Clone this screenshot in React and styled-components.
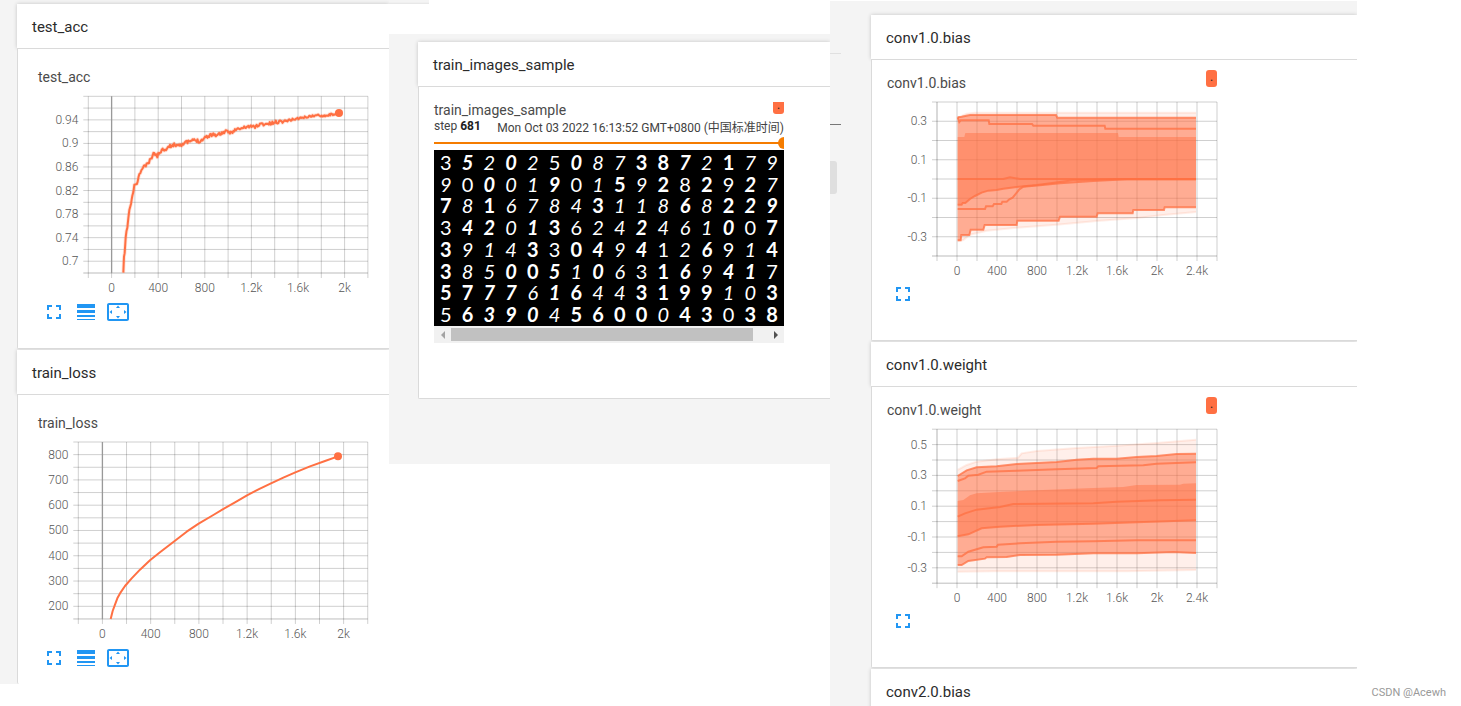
import React from 'react';
import styled, { createGlobalStyle, css } from 'styled-components';

const ORANGE = '#ff7043';

const GlobalStyle = createGlobalStyle`
  * { box-sizing: border-box; }
  body {
    margin: 0;
    background: #fff;
    font-family: Roboto, 'Noto Sans CJK SC', sans-serif;
    color: #212121;
  }
`;

const Page = styled.main`
  display: grid;
  grid-template-columns: 389fr 441fr 527fr 104fr;
  height: 100vh;
  overflow: hidden;
`;

const Column = styled.div`
  min-width: 0;
  display: flex;
  flex-direction: column;
`;

const Pane = styled.div`
  background: #f4f4f4;
  overflow: hidden;
  padding: ${(p) => p.$pad};
  ${(p) => p.$fill && css`
    flex: 1;
    min-height: 0;
    margin-top: 1px;
    display: flex;
  `}
`;

const TopStrip = styled.div`
  width: 40px;
  height: 4px;
  margin-bottom: 30px;
  background: linear-gradient(#f4f4f4 50%, #e4e4e4);
`;

const Stack = styled.div`
  flex: 1;
  min-width: 0;
  padding-top: 14px;
`;

const Gutter = styled.div`
  width: 41px;
  flex: none;
  display: flex;
  flex-direction: column;
`;

const GutterRule = styled.div`
  width: 11px;
  height: 1px;
  margin-top: ${(p) => p.$top}px;
  background: ${(p) => p.$color};
`;

const GutterThumb = styled.div`
  width: 7px;
  height: 33px;
  margin-top: 36px;
  border-radius: 0 3px 3px 0;
  background: #dfdfdf;
`;

const Card = styled.section`
  margin-bottom: ${(p) => (p.$open ? 0 : 1)}px;
`;

const CardHead = styled.h2`
  margin: 0;
  height: 44px;
  padding: 1px 15px 0;
  display: flex;
  align-items: center;
  background: #fff;
  box-shadow: 0 0 4px rgba(0, 0, 0, 0.2);
  font-size: 15px;
  font-weight: 400;
  line-height: 20px;
  color: #2b2b2b;
`;

const CardBody = styled.div`
  min-height: ${(p) => p.$height}px;
  padding: ${(p) => p.$pad};
  background: #fff;
  border: 1px solid #dadada;
  border-right: 0;
  border-bottom-width: ${(p) => (p.$open ? 0 : 1)}px;
  border-bottom-left-radius: 2px;
  position: relative;
`;

const TitleRow = styled.div`
  display: flex;
  justify-content: space-between;
  align-items: flex-start;
  max-width: ${(p) => p.$width}px;
  height: 20px;
`;

const ChartTitle = styled.h3`
  margin: 0;
  font-size: 14px;
  font-weight: 400;
  line-height: 20px;
  color: #4a4a4a;
`;

const RunBadge = styled.span`
  width: 11px;
  height: ${(p) => (p.$cut ? 12 : 17)}px;
  margin-top: ${(p) => (p.$cut ? 2 : -3)}px;
  border-radius: ${(p) => (p.$cut ? '0 0 3px 3px' : '3px')};
  background: ${ORANGE};
  font-size: 12px;
  line-height: ${(p) => (p.$cut ? 6 : 15)}px;
  text-align: center;
`;

const Plot = styled.svg`
  display: block;
  margin-top: ${(p) => p.$gap}px;
  text {
    font-size: 12px;
    font-weight: 300;
    fill: #555;
  }
`;

const Toolbar = styled.div`
  display: flex;
  gap: 8px;
  margin: 4px 0 0 4px;
`;

const IconButton = styled.button`
  width: 24px;
  height: 24px;
  padding: 0;
  border: 0;
  background: none;
  color: #2196f3;
  cursor: pointer;
  svg { display: block; fill: currentColor; }
`;

const StepRow = styled.div`
  display: flex;
  justify-content: space-between;
  max-width: 350px;
  height: 16px;
  font-size: 12px;
  line-height: 16px;
  white-space: nowrap;
  color: #424242;
`;

const Step = styled.span`
  line-height: 12px;
  b { font-weight: 700; color: #212121; }
`;

const SliderBox = styled.div`
  max-width: 350px;
  height: 14px;
  overflow: hidden;
`;

const Slider = styled.input`
  appearance: none;
  display: block;
  width: calc(100% + 6px);
  height: 14px;
  margin: 0;
  background: linear-gradient(#f57c00, #f57c00) center / 100% 2px no-repeat;
  &::-webkit-slider-thumb {
    appearance: none;
    width: 12px;
    height: 12px;
    border-radius: 50%;
    background: #f57c00;
  }
`;

const DigitSheet = styled.div`
  max-width: 350px;
  height: 176px;
  padding: 1px;
  background: #000;
  display: grid;
  grid-template-columns: repeat(16, 1fr);
  grid-template-rows: repeat(8, 1fr);
  overflow: hidden;
`;

const Digit = styled.span`
  display: flex;
  align-items: center;
  justify-content: center;
  color: #fff;
  font-family: Lato, sans-serif;
  font-size: 20px;
  line-height: 20px;
  font-weight: ${(p) => (p.$hand === 'b' || p.$hand === 'x' ? 700 : 400)};
  font-style: ${(p) => (p.$hand === 'i' || p.$hand === 'x' ? 'italic' : 'normal')};
`;

const ScrollTrack = styled.div`
  max-width: 350px;
  height: 17px;
  display: flex;
  align-items: center;
  background: #f1f1f1;
`;

const ScrollArrow = styled.button`
  width: 17px;
  height: 17px;
  padding: 0;
  border: 0;
  background: none;
  display: grid;
  place-items: center;
  color: ${(p) => (p.$dim ? '#a3a3a3' : '#505050')};
  svg { display: block; fill: currentColor; }
`;

const ScrollLane = styled.div`
  flex: 1;
`;

const ScrollThumb = styled.div`
  width: 302px;
  max-width: 96%;
  height: 13px;
  background: #c1c1c1;
`;

const Credit = styled.footer`
  margin-top: auto;
  padding: 0 15px 13px 0;
  text-align: right;
  font-size: 11px;
  line-height: 16px;
  color: #999;
  white-space: nowrap;
`;

const ICONS = {
  'Toggle full screen':
    'M7 14H5v5h5v-2H7v-3zm-2-4h2V7h3V5H5v5zm12 7h-3v2h5v-5h-2v3zM14 5v2h3v3h2V5h-5z',
  'Toggle log scale':
    'M3 17h18v-2H3v2zm0 3h18v-1H3v1zm0-7h18v-3H3v3zm0-9v4h18V4H3z',
  'Fit to data':
    'M12.01 5.5L10 8h4l-1.99-2.5zM18 10v4l2.5-1.99L18 10zM6 10l-2.5 2.01L6 14v-4zm8 6h-4l2.01 2.5L14 16zm7-13H3c-1.1 0-2 .9-2 2v14c0 1.1.9 2 2 2h18c1.1 0 2-.9 2-2V5c0-1.1-.9-2-2-2zm0 16.01H3V4.99h18v14.02z',
};

function Tools({ names }) {
  return (
    <Toolbar>
      {names.map((name) => (
        <IconButton key={name} type="button" aria-label={name}>
          <svg width="24" height="24" viewBox="0 0 24 24">
            <path d={ICONS[name]} />
          </svg>
        </IconButton>
      ))}
    </Toolbar>
  );
}

// Grid lines, ticks and labels. Every second line carries a label.
function Axes({ x, y, zero }) {
  const xs = Array.from({ length: x.count }, (_, i) => x.start + i * x.step);
  const ys = Array.from({ length: y.count }, (_, i) => y.start + i * y.step);
  const left = xs[0] - 5;
  const right = xs[xs.length - 1];
  const top = ys[0];
  const bottom = ys[ys.length - 1];
  return (
    <>
      <g stroke="#000" strokeOpacity="0.19">
        {xs.map((v) => <line key={v} x1={v} x2={v} y1={top} y2={bottom + 5} />)}
        {ys.map((v) => <line key={v} x1={left} x2={right} y1={v} y2={v} />)}
        <line x1={left} x2={right} y1={bottom} y2={bottom} strokeOpacity="0.08" />
        {!zero && <line x1={xs[0]} x2={xs[0]} y1={top} y2={bottom} strokeOpacity="0.12" />}
      </g>
      {zero && <line x1={xs[1]} x2={xs[1]} y1={top} y2={bottom} stroke="#999" strokeWidth="1.3" />}
      {x.labels.map((t, i) => (
        <text key={t} x={xs[1 + 2 * i]} y={bottom + 19} textAnchor="middle">{t}</text>
      ))}
      {y.labels.map((t, i) => (
        <text key={t} x={left - 5} y={ys[y.first + 2 * i] + 4} textAnchor="end">{t}</text>
      ))}
    </>
  );
}

const join = (pts) => 'M' + pts.join('L');

// Resamples a curve and adds a repeatable ripple to it.
function ripple(pts, gap, size) {
  const out = [pts[0]];
  let seed = 11;
  for (let i = 1; i < pts.length; i++) {
    const [ax, ay] = pts[i - 1];
    const [bx, by] = pts[i];
    const n = Math.max(1, Math.round((bx - ax) / gap));
    for (let k = 1; k <= n; k++) {
      seed = (seed * 16807) % 2147483647;
      const r = seed / 2147483647 - 0.5;
      const px = ax + ((bx - ax) * k) / n;
      const amp = px > 850 ? size * 0.6 : size;
      out.push([px, ay + ((by - ay) * k) / n + r * amp]);
    }
  }
  out[out.length - 1] = pts[pts.length - 1];
  return out;
}

const ACC = ripple([
  [370, 818], [372, 775], [374, 760], [377, 715], [382, 680], [388, 630], [393, 612], [397, 590],
  [403, 558], [413, 546], [418, 525], [424, 510], [432, 499], [440, 495], [447, 487], [455, 472],
  [463, 458], [472, 468], [480, 455], [488, 449], [500, 445], [515, 436], [530, 434], [545, 433],
  [560, 427], [585, 420], [600, 424], [615, 412], [640, 402], [650, 406], [675, 395], [690, 398],
  [710, 388], [725, 386], [740, 380], [765, 380], [780, 373], [812, 371], [830, 366], [860, 362],
  [890, 356], [925, 350], [950, 346], [975, 347], [1017, 339],
], 2.6, 10);

const LOSS = [
  [332, 822], [338, 798], [345, 779], [352, 760], [362, 742], [375, 723], [395, 700], [420, 674],
  [450, 646], [480, 622], [523, 589], [560, 560], [596, 536], [640, 510], [668, 493], [705, 472],
  [741, 451], [780, 431], [813, 415], [850, 398], [886, 382], [930, 364], [975, 348], [1014, 334],
];

const BIAS = {
  max: [[293, 352], [300, 350], [320, 341], [345, 338], [1008, 338]],
  top: [[293, 352], [305, 350], [330, 345], [588, 345], [592, 353], [1008, 353]],
  innerTop: [[293, 411], [313, 411], [316, 399], [774, 399], [776, 411], [1008, 411]],
  innerBottom: [[293, 614], [305, 614], [308, 609], [316, 609], [330, 597], [345, 588], [365, 578], [385, 572], [410, 570], [430, 566], [470, 561], [530, 555], [560, 551], [600, 546], [640, 541], [760, 538], [1008, 538]],
  bottom: [[293, 721], [302, 721], [304, 705], [328, 705], [332, 689], [370, 689], [374, 675], [470, 675], [472, 662], [596, 662], [600, 650], [710, 650], [713, 640], [818, 640], [820, 630], [912, 630], [914, 622], [1008, 622]],
  min: [[293, 724], [310, 720], [330, 704], [380, 692], [470, 683], [590, 674], [710, 663], [830, 654], [910, 645], [1008, 636]],
  lines: [
    [[293, 352], [298, 366], [302, 361], [386, 361], [388, 372], [516, 372], [520, 377], [734, 377], [736, 386], [1008, 386]],
    [[293, 537], [430, 537], [450, 532], [480, 537], [1008, 537]],
    [[293, 627], [375, 627], [378, 619], [398, 619], [402, 612], [424, 612], [427, 605], [440, 605], [448, 598], [458, 593], [466, 583], [478, 568], [490, 560], [540, 556], [600, 550], [700, 543], [800, 538], [1008, 538]],
  ],
};

const WEIGHT = {
  max: [[293, 405], [320, 390], [350, 380], [410, 373], [474, 368], [485, 355], [530, 348], [650, 339], [770, 332], [890, 324], [1008, 314]],
  top: [[293, 423], [320, 406], [350, 397], [410, 394], [470, 387], [590, 381], [650, 374], [700, 371], [770, 371], [830, 366], [890, 363], [950, 357], [1008, 356]],
  innerTop: [[293, 498], [310, 495], [330, 481], [350, 475], [420, 471], [550, 465], [680, 460], [790, 456], [830, 450], [960, 449], [970, 446], [1008, 445]],
  innerBottom: [[293, 604], [325, 598], [365, 580], [420, 575], [530, 570], [700, 566], [830, 562], [1008, 556]],
  bottom: [[293, 690], [305, 690], [325, 678], [375, 671], [380, 667], [440, 666], [480, 660], [590, 659], [700, 655], [830, 655], [940, 651], [1008, 654]],
  min: [[293, 710], [400, 709], [800, 709], [1008, 705]],
  lines: [
    [[293, 438], [315, 430], [325, 422], [355, 419], [380, 410], [470, 407], [590, 403], [710, 399], [715, 394], [850, 391], [890, 386], [1008, 382]],
    [[293, 545], [315, 535], [350, 524], [420, 516], [460, 507], [700, 505], [770, 500], [900, 496], [1008, 494]],
    [[293, 664], [305, 664], [325, 650], [370, 637], [410, 635], [414, 629], [480, 625], [590, 620], [700, 619], [830, 616], [1008, 616]],
  ],
};

function ScalarCard({ name, x, y, curve, shiftY, open, noisy }) {
  const end = curve[curve.length - 1];
  return (
    <Card $open={open}>
      <CardHead>{name}</CardHead>
      <CardBody $height={open ? 290 : 301} $pad="18px 0 0 20px" $open={open}>
        <TitleRow $width={330}>
          <ChartTitle>{name}</ChartTitle>
        </TitleRow>
        <Plot width="340" height="204" $gap={5} role="img" aria-label={`${name} by step`}>
          <Axes x={x} y={y} zero />
          <g transform={`translate(-38 ${shiftY}) scale(0.33333)`} fill="none" stroke={ORANGE} strokeLinejoin="round">
            {noisy && <path d={join(curve)} strokeWidth="11" strokeOpacity="0.2" />}
            <path d={join(curve)} strokeWidth="6" />
            <circle cx={end[0]} cy={end[1]} r="12" fill={ORANGE} stroke="none" />
          </g>
        </Plot>
        <Tools names={['Toggle full screen', 'Toggle log scale', 'Fit to data']} />
      </CardBody>
    </Card>
  );
}

function DistributionCard({ name, y, bands, shiftY }) {
  const area = (a, b) => join([...a, ...[...b].reverse()]) + 'Z';
  return (
    <Card>
      <CardHead>{name}</CardHead>
      <CardBody $height={282} $pad="13px 0 0 15px">
        <TitleRow $width={330}>
          <ChartTitle>{name}</ChartTitle>
          <RunBadge>.</RunBadge>
        </TitleRow>
        <Plot width="340" height="182" $gap={3} role="img" aria-label={`${name} distribution`}>
          <Axes
            x={{ start: 50, step: 20, count: 15, labels: ['0', '400', '800', '1.2k', '1.6k', '2k', '2.4k'] }}
            y={y}
          />
          <g transform={`translate(-27 ${shiftY}) scale(0.33333)`} fill={ORANGE}>
            <path d={area(bands.max, bands.min)} opacity="0.11" />
            <path d={area(bands.top, bands.bottom)} opacity="0.52" />
            <path d={area(bands.innerTop, bands.innerBottom)} opacity="0.47" />
            <g fill="none" stroke={ORANGE} strokeWidth="6">
              <path d={join(bands.max)} opacity="0.12" />
              <path d={join(bands.min)} opacity="0.12" />
              {[bands.top, bands.innerBottom, bands.bottom, ...bands.lines].map((line, i) => (
                <path key={i} d={join(line)} opacity="0.75" />
              ))}
            </g>
          </g>
        </Plot>
        <Tools names={['Toggle full screen']} />
      </CardBody>
    </Card>
  );
}

const SHEET = [
  '3520250873872179',
  '9000190159282927',
  '7816784311868229',
  '3420136242461007',
  '3914330494126914',
  '3850051063169417',
  '5777616443199103',
  '5639045600043038',
];

// Handwriting of each digit: n upright, b upright heavy, i slanted, x slanted heavy.
const HANDS = [
  'nxixinxiibbxibii',
  'inxiixnibibnbnxi',
  'bibiiiibiiixibxx',
  'nxxixbniixiiixnb',
  'biiibnbxixnixnib',
  'biixbxixinbxixxn',
  'bbxxixbiibbbbiib',
  'nbxxxibbbbibbnbb',
].join('');

function ImagesCard() {
  return (
    <Card>
      <CardHead>train_images_sample</CardHead>
      <CardBody $height={313} $pad="13px 0 0 15px">
        <TitleRow $width={350}>
          <ChartTitle>train_images_sample</ChartTitle>
          <RunBadge $cut>.</RunBadge>
        </TitleRow>
        <StepRow>
          <Step>step <b>681</b></Step>
          <span>Mon Oct 03 2022 16:13:52 GMT+0800 (中国标准时间)</span>
        </StepRow>
        <SliderBox>
          <Slider type="range" min="0" max="681" defaultValue="681" aria-label="step" />
        </SliderBox>
        <DigitSheet>
          {SHEET.join('').split('').map((d, i) => (
            <Digit key={i} $hand={HANDS[i]}>{d}</Digit>
          ))}
        </DigitSheet>
        <ScrollTrack>
          <ScrollArrow type="button" aria-label="Scroll left" $dim>
            <svg width="4" height="8"><path d="M4 0v8L0 4z" /></svg>
          </ScrollArrow>
          <ScrollLane><ScrollThumb /></ScrollLane>
          <ScrollArrow type="button" aria-label="Scroll right">
            <svg width="4" height="8"><path d="M0 0v8l4-4z" /></svg>
          </ScrollArrow>
        </ScrollTrack>
      </CardBody>
    </Card>
  );
}

const STEPS = ['0', '400', '800', '1.2k', '1.6k', '2k'];

export default function App() {
  return (
    <>
      <GlobalStyle />
      <Page>
        <Column>
          <Pane $pad="4px 0 0 17px">
            <ScalarCard
              name="test_acc"
              x={{ start: 50.3, step: 23.3, count: 13, labels: STEPS }}
              y={{ start: 4.3, step: 11.78, count: 16, first: 2, labels: ['0.94', '0.9', '0.86', '0.82', '0.78', '0.74', '0.7'] }}
              curve={ACC}
              shiftY={-92}
              noisy
            />
            <ScalarCard
              name="train_loss"
              x={{ start: 40.3, step: 24.12, count: 13, labels: STEPS }}
              y={{ start: 4, step: 12.64, count: 15, first: 1, labels: ['800', '700', '600', '500', '400', '300', '200'] }}
              curve={LOSS}
              shiftY={-93}
              open
            />
          </Pane>
        </Column>
        <Column>
          <TopStrip />
          <Pane $pad="8px 0 64px 29px">
            <ImagesCard />
          </Pane>
        </Column>
        <Column>
          <Pane $fill $pad="0">
            <Gutter>
              <GutterRule $top={52} $color="#e0e0e0" />
              <GutterRule $top={70} $color="#777" />
              <GutterThumb />
            </Gutter>
            <Stack>
              <DistributionCard
                name="conv1.0.bias"
                y={{ start: 6, step: 19.25, count: 9, first: 1, labels: ['0.3', '0.1', '-0.1', '-0.3'] }}
                bands={BIAS}
                shiftY={-96}
              />
              <DistributionCard
                name="conv1.0.weight"
                y={{ start: 6.2, step: 15.4, count: 11, first: 1, labels: ['0.5', '0.3', '0.1', '-0.1', '-0.3'] }}
                bands={WEIGHT}
                shiftY={-88}
              />
              <Card>
                <CardHead>conv2.0.bias</CardHead>
              </Card>
            </Stack>
          </Pane>
        </Column>
        <Column>
          <Credit>CSDN @Acewh</Credit>
        </Column>
      </Page>
    </>
  );
}
